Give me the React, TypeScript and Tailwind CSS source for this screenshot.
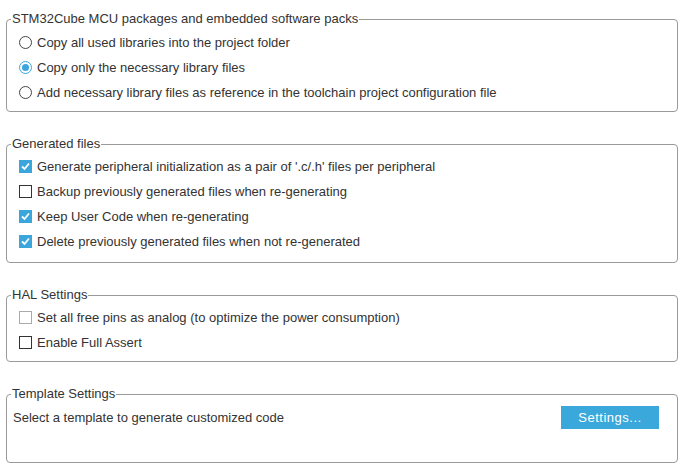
import type { ReactNode } from 'react';

function Radio({ checked }: { checked?: boolean }) {
  return (
    <span
      className={`flex h-[13px] w-[13px] shrink-0 items-center justify-center rounded-full border ${
        checked ? 'border-[#3ba6dc]' : 'border-[#444]'
      } bg-white`}
    >
      {checked && <span className="h-[7px] w-[7px] rounded-full bg-[#3ba6dc]" />}
    </span>
  );
}

function Checkbox({ checked, light }: { checked?: boolean; light?: boolean }) {
  if (checked) {
    return (
      <span className="flex h-[13px] w-[13px] shrink-0 items-center justify-center bg-[#3ba6dc]">
        <svg width="11" height="11" viewBox="0 0 11 11">
          <polyline points="2,5.5 4.5,8 9,2.5" fill="none" stroke="white" strokeWidth="1.8" />
        </svg>
      </span>
    );
  }
  return (
    <span
      className={`h-[13px] w-[13px] shrink-0 border bg-white ${light ? 'border-[#aaa]' : 'border-[#333]'}`}
    />
  );
}

function Row({ control, children }: { control: ReactNode; children: ReactNode }) {
  return (
    <div className="flex h-[25px] items-center gap-[5px]">
      {control}
      <span>{children}</span>
    </div>
  );
}

function Group({ title, children, className = '' }: { title: string; children: ReactNode; className?: string }) {
  return (
    <fieldset className={`w-[672px] rounded-[4px] border border-[#9a9a9a] ${className}`}>
      <legend className="ml-[4px] px-px leading-[16px]">{title}</legend>
      {children}
    </fieldset>
  );
}

export default function App() {
  return (
    <div
      className="h-[465px] w-[686px] overflow-hidden bg-white pl-[6px] pt-[11px] text-[13px] text-[#333]"
      style={{ fontFamily: '"Liberation Sans", Arial, sans-serif' }}
    >
      <Group title="STM32Cube MCU packages and embedded software packs" className="pb-[6px] pt-[3px]">
        <div className="pl-[12px]">
          <Row control={<Radio />}>Copy all used libraries into the project folder</Row>
          <Row control={<Radio checked />}>Copy only the necessary library files</Row>
          <Row control={<Radio />}>
            Add necessary library files as reference in the toolchain project configuration file
          </Row>
        </div>
      </Group>

      <Group title="Generated files" className="mt-[24px] pb-[8px] pt-[2px]">
        <div className="pl-[12px]">
          <Row control={<Checkbox checked />}>
            Generate peripheral initialization as a pair of '.c/.h' files per peripheral
          </Row>
          <Row control={<Checkbox />}>Backup previously generated files when re-generating</Row>
          <Row control={<Checkbox checked />}>Keep User Code when re-generating</Row>
          <Row control={<Checkbox checked />}>Delete previously generated files when not re-generated</Row>
        </div>
      </Group>

      <Group title="HAL Settings" className="mt-[24px] pb-[6px] pt-[2px]">
        <div className="pl-[12px]">
          <Row control={<Checkbox light />}>Set all free pins as analog (to optimize the power consumption)</Row>
          <Row control={<Checkbox />}>Enable Full Assert</Row>
        </div>
      </Group>

      <Group title="Template Settings" className="mt-[24px] pb-[33px] pt-[4px]">
        <div className="flex items-center justify-between pl-[6px] pr-[18px]">
          <span>Select a template to generate customized code</span>
          <button className="h-[23px] w-[98px] bg-[#3aa8db] tracking-[0.5px] text-white">Settings...</button>
        </div>
      </Group>
    </div>
  );
}
